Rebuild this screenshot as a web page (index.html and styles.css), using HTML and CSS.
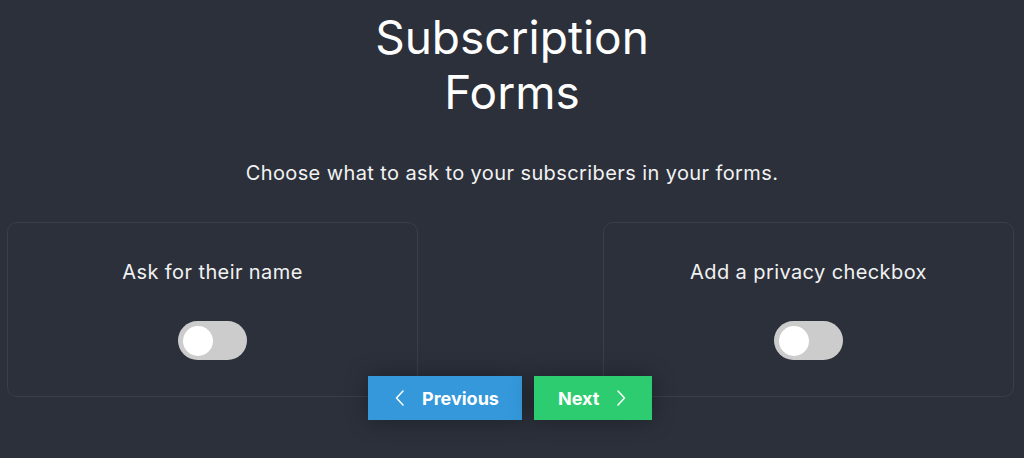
FILE: index.html
```html
<!DOCTYPE html>
<html lang="en">
<head>
<meta charset="utf-8">
<title>Subscription Forms</title>
<link rel="stylesheet" href="styles.css">
</head>
<body>
<main class="page">
  <h1 class="title">Subscription Forms</h1>
  <p class="subtitle">Choose what to ask to your subscribers in your forms.</p>
  <section class="cards">
    <div class="card">
      <div class="card-label">Ask for their name</div>
      <span class="toggle"><span class="knob"></span></span>
    </div>
    <div class="card">
      <div class="card-label">Add a privacy checkbox</div>
      <span class="toggle"><span class="knob"></span></span>
    </div>
  </section>
  <nav class="nav">
    <button class="btn btn-prev">
      <svg class="chev" width="12" height="18" viewBox="0 0 12 18"><path d="M9 2 L2.5 9 L9 16" fill="none" stroke="#fff" stroke-width="1.5" stroke-linecap="round" stroke-linejoin="round"/></svg>
      <span>Previous</span>
    </button>
    <button class="btn btn-next">
      <span>Next</span>
      <svg class="chev" width="12" height="18" viewBox="0 0 12 18"><path d="M3 2 L9.5 9 L3 16" fill="none" stroke="#fff" stroke-width="1.5" stroke-linecap="round" stroke-linejoin="round"/></svg>
    </button>
  </nav>
</main>
</body>
</html>
```

FILE: styles.css
```css
* { box-sizing: border-box; }
html, body {
  margin: 0;
  padding: 0;
  background: #2b303b;
  height: 100%;
}
body {
  font-family: Inter, "Noto Sans", sans-serif;
  color: #fff;
  overflow: hidden;
}
.page {
  position: relative;
  height: 458px;
  display: flex;
  flex-direction: column;
  align-items: center;
}
.title {
  margin: 10px 0 0;
  width: 300px;
  font-size: 46px;
  font-weight: 400;
  line-height: 55px;
  text-align: center;
  color: #fff;
}
.subtitle {
  margin: 41px 0 0;
  font-size: 20px;
  letter-spacing: 0.4px;
  line-height: 24px;
  color: #f2f2f2;
  text-align: center;
}
.cards {
  align-self: stretch;
  display: flex;
  justify-content: space-between;
  padding: 0 10px 0 7px;
  margin-top: 37px;
}
.card {
  width: 411px;
  height: 175px;
  border: 1px solid #393e49;
  border-radius: 10px;
  display: flex;
  flex-direction: column;
  align-items: center;
  padding-top: 37px;
}
.card-label {
  font-size: 20px;
  letter-spacing: 0.4px;
  line-height: 24px;
  color: #f2f2f2;
}
.toggle {
  margin-top: 37px;
  width: 69px;
  height: 39px;
  border-radius: 20px;
  background: #cccccc;
  display: flex;
  align-items: center;
  padding-left: 5px;
}
.knob {
  width: 30px;
  height: 30px;
  border-radius: 50%;
  background: #fff;
}
.nav {
  position: absolute;
  top: 376px;
  left: 368px;
  display: flex;
  gap: 12px;
}
.btn {
  height: 44px;
  border: 0;
  border-radius: 0;
  color: #fff;
  font-family: Inter, "Noto Sans", sans-serif;
  font-size: 18px;
  font-weight: 700;
  display: flex;
  align-items: center;
  gap: 16px;
  box-shadow: 0 0 22px rgba(0, 0, 0, 0.35);
  cursor: pointer;
}
.btn-prev {
  width: 154px;
  background: #3498db;
  padding: 0 0 0 26px;
}
.btn-next {
  width: 118px;
  background: #2ecc71;
  padding: 0 0 0 24px;
}
.chev { display: block; }
```
